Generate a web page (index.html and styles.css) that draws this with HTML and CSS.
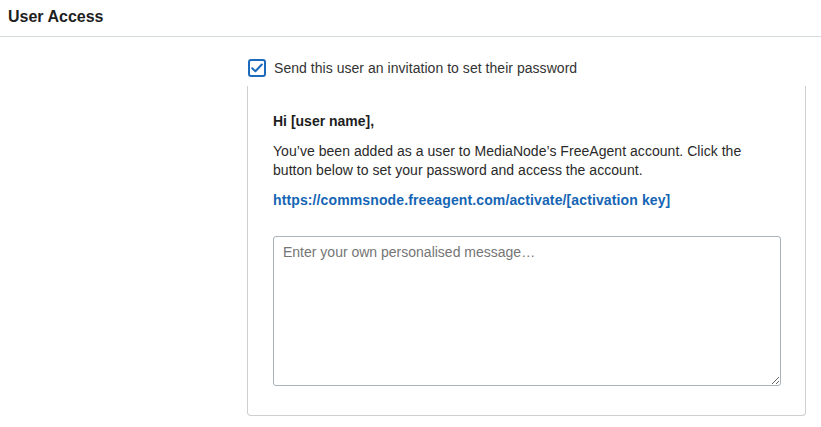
FILE: index.html
```html
<!DOCTYPE html>
<html>
<head>
<meta charset="utf-8">
<link rel="stylesheet" href="styles.css">
</head>
<body>
<h2 class="section-title">User Access</h2>
<div class="section-body">
  <div class="label-col"></div>
  <div class="field-col">
    <label class="check-row">
      <span class="checkbox">
        <svg width="12" height="10" viewBox="0 0 12 10"><path d="M1.2 5.2 L4.4 8.3 L10.8 1.5" fill="none" stroke="#1c6bbd" stroke-width="2" stroke-linecap="round" stroke-linejoin="round"/></svg>
      </span>
      <span class="check-text">Send this user an invitation to set their password</span>
    </label>
    <div class="panel">
      <p class="greeting">Hi [user name],</p>
      <p class="message">You’ve been added as a user to MediaNode’s FreeAgent account. Click the button below to set your password and access the account.</p>
      <p class="link">https://commsnode.freeagent.com/activate/[activation key]</p>
      <textarea class="note" placeholder="Enter your own personalised message…"></textarea>
    </div>
  </div>
</div>
</body>
</html>
```
FILE: styles.css
```css
html, body {
  margin: 0;
  padding: 0;
  background: #fff;
  font-family: "Liberation Sans", Arial, sans-serif;
  color: #222;
}
.section-title {
  margin: 0;
  height: 37px;
  box-sizing: border-box;
  padding: 7px 8px 0;
  font-size: 16px;
  font-weight: bold;
  line-height: 19px;
  color: #1e1e1e;
  border-bottom: 1px solid #d5dadd;
}
.section-body {
  display: flex;
  padding: 21px 15px 0 0;
}
.label-col {
  width: 247px;
  flex: none;
}
.field-col {
  flex: 1;
}
.check-row {
  display: flex;
  align-items: center;
  gap: 8px;
  height: 20px;
  padding-left: 1px;
}
.checkbox {
  width: 14px;
  height: 14px;
  border: 2px solid #1c6bbd;
  border-radius: 3px;
  display: flex;
  align-items: center;
  justify-content: center;
}
.check-text {
  font-size: 14px;
  color: #333;
  letter-spacing: 0.04px;
}
.panel {
  margin-top: 8px;
  border: 1px solid #cfcfcf;
  border-top: none;
  border-radius: 0 0 4px 4px;
  padding: 26px 24px 29px 25px;
  display: flex;
  flex-direction: column;
}
.panel p {
  margin: 0 0 10px;
  font-size: 14px;
  line-height: 19.5px;
}
.greeting {
  font-weight: bold;
  color: #1e1e1e;
}
.message {
  color: #2a2a2a;
  letter-spacing: 0.04px;
}
.link {
  font-weight: bold;
  color: #1565b4;
  letter-spacing: 0.12px;
}
.panel .link {
  margin-bottom: 26px;
}
.note {
  height: 150px;
  box-sizing: border-box;
  border: 1px solid #a8b3ba;
  border-radius: 3px;
  padding: 6px 9px;
  font-family: "Liberation Sans", Arial, sans-serif;
  font-size: 14px;
  line-height: 18px;
  resize: vertical;
  margin: 0;
}
.note::placeholder {
  color: #757575;
}
```
